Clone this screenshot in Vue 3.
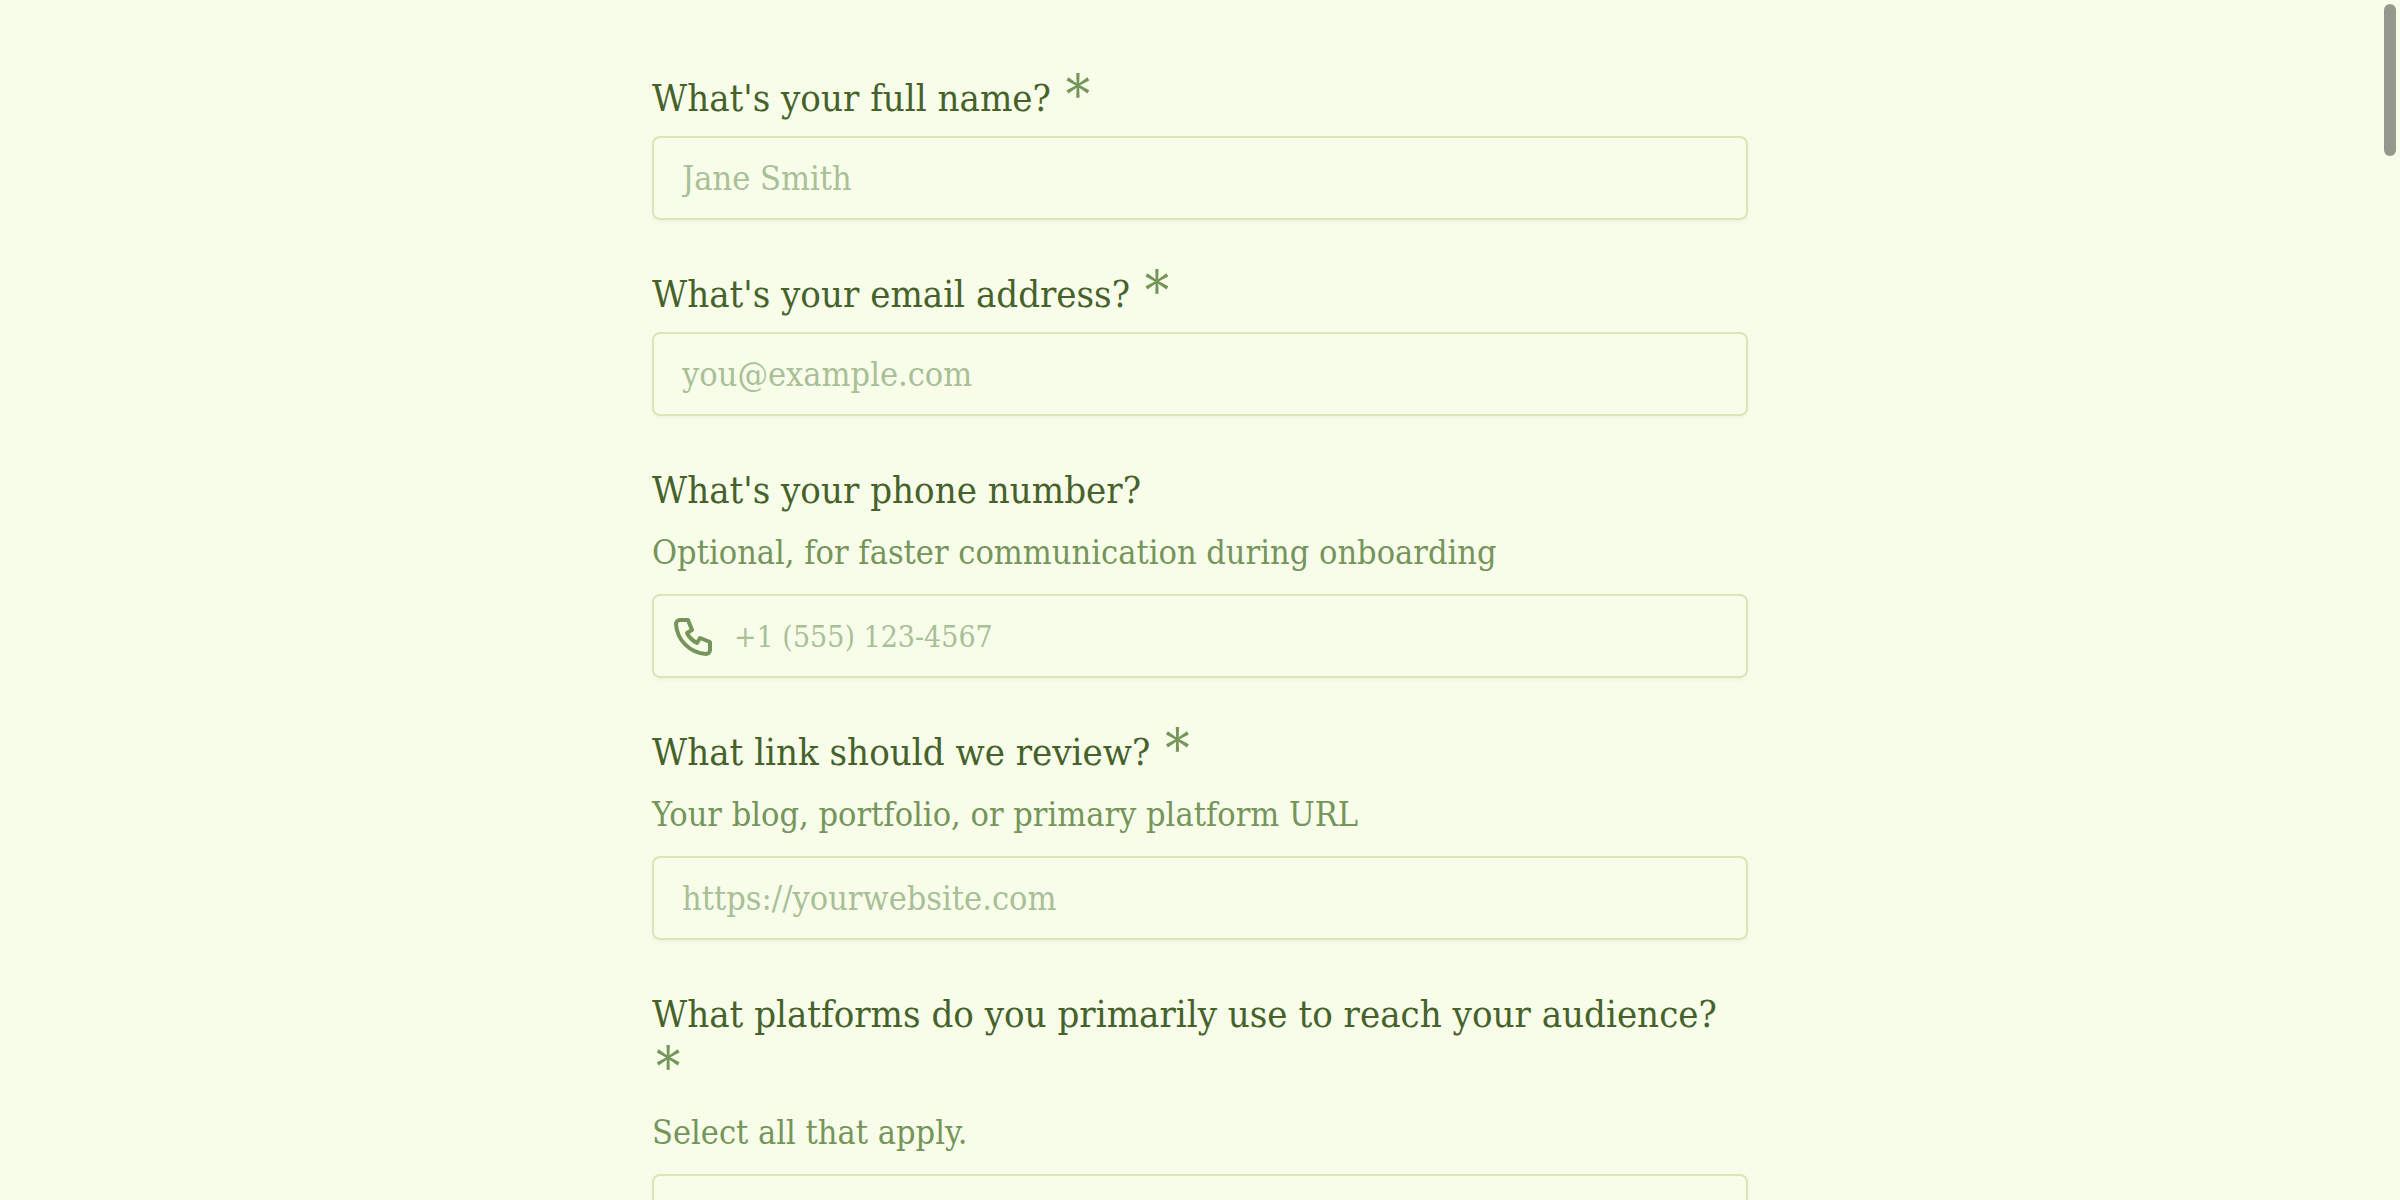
<script setup>
const fields = [
  { id: 'name', label: "What's your full name?", required: true, type: 'text', placeholder: 'Jane Smith' },
  { id: 'email', label: "What's your email address?", required: true, type: 'email', placeholder: 'you@example.com' },
  { id: 'phone', label: "What's your phone number?", hint: 'Optional, for faster communication during onboarding', type: 'tel', placeholder: '+1 (555) 123-4567', icon: true },
  { id: 'link', label: 'What link should we review?', required: true, hint: 'Your blog, portfolio, or primary platform URL', type: 'url', placeholder: 'https://yourwebsite.com' },
  { id: 'platforms', label: 'What platforms do you primarily use to reach your audience?', required: true, hint: 'Select all that apply.', type: 'text', placeholder: '' },
]
</script>

<template>
  <main class="page">
    <form class="form" @submit.prevent>
      <div v-for="f in fields" :key="f.id" class="field">
        <label class="label" :for="f.id">{{ f.label }} <span v-if="f.required" class="star">*</span></label>
        <p v-if="f.hint" :id="f.id + '-hint'" class="hint">{{ f.hint }}</p>
        <div class="control">
          <svg v-if="f.icon" class="icon" viewBox="0 0 24 24" aria-hidden="true">
            <path d="M5 4h4l2 5l-2.5 1.5a11 11 0 0 0 5 5l1.5 -2.5l5 2v4a2 2 0 0 1 -2 2a16 16 0 0 1 -15 -15a2 2 0 0 1 2 -2" />
          </svg>
          <input :id="f.id" class="input" :type="f.type" :placeholder="f.placeholder" :aria-describedby="f.hint ? f.id + '-hint' : null" />
        </div>
      </div>
    </form>
    <div class="thumb" aria-hidden="true"></div>
  </main>
</template>

<style>
body {
  background: #f8fdea;
}
</style>

<style scoped>
.page {
  height: 100vh;
  overflow: hidden;
  background: #f8fdea;
  font-family: "DejaVu Serif Condensed", "DejaVu Serif", serif;
}
.form {
  box-sizing: border-box;
  max-width: 1128px;
  margin: 0 auto;
  padding: 70px 16px;
  display: flex;
  flex-direction: column;
  gap: 46px;
}
.label {
  display: block;
  padding-bottom: 10px;
  font-size: 38px;
  line-height: 56px;
  color: #46622a;
}
.star {
  padding-left: 4px;
  font-size: 54px;
  line-height: 0;
  vertical-align: -3px;
  color: #75955b;
}
.hint {
  margin: 0;
  padding-bottom: 18px;
  font-size: 34px;
  line-height: 48px;
  color: #75955b;
}
.control {
  display: flex;
  align-items: center;
  gap: 16px;
  height: 80px;
  padding-left: 16px;
  border: 2px solid #d9e6b6;
  border-radius: 8px;
  box-shadow: 0 2px 4px rgba(70, 98, 42, 0.06);
}
.icon {
  flex: none;
  width: 48px;
  height: 48px;
  fill: none;
  stroke: #75955b;
  stroke-width: 2;
  stroke-linecap: round;
  stroke-linejoin: round;
}
.input {
  flex: 1;
  min-width: 0;
  height: 100%;
  padding: 0 12px;
  border: 0;
  outline: 0;
  background: transparent;
  font: inherit;
  font-size: 34px;
  color: #46622a;
}
.icon + .input {
  padding-left: 0;
  font-size: 30px;
}
.input::placeholder {
  color: #a9bf97;
  opacity: 1;
}
.thumb {
  position: fixed;
  top: 4px;
  right: 4px;
  width: 12px;
  height: 152px;
  border-radius: 6px;
  background: #94998d;
}
</style>
